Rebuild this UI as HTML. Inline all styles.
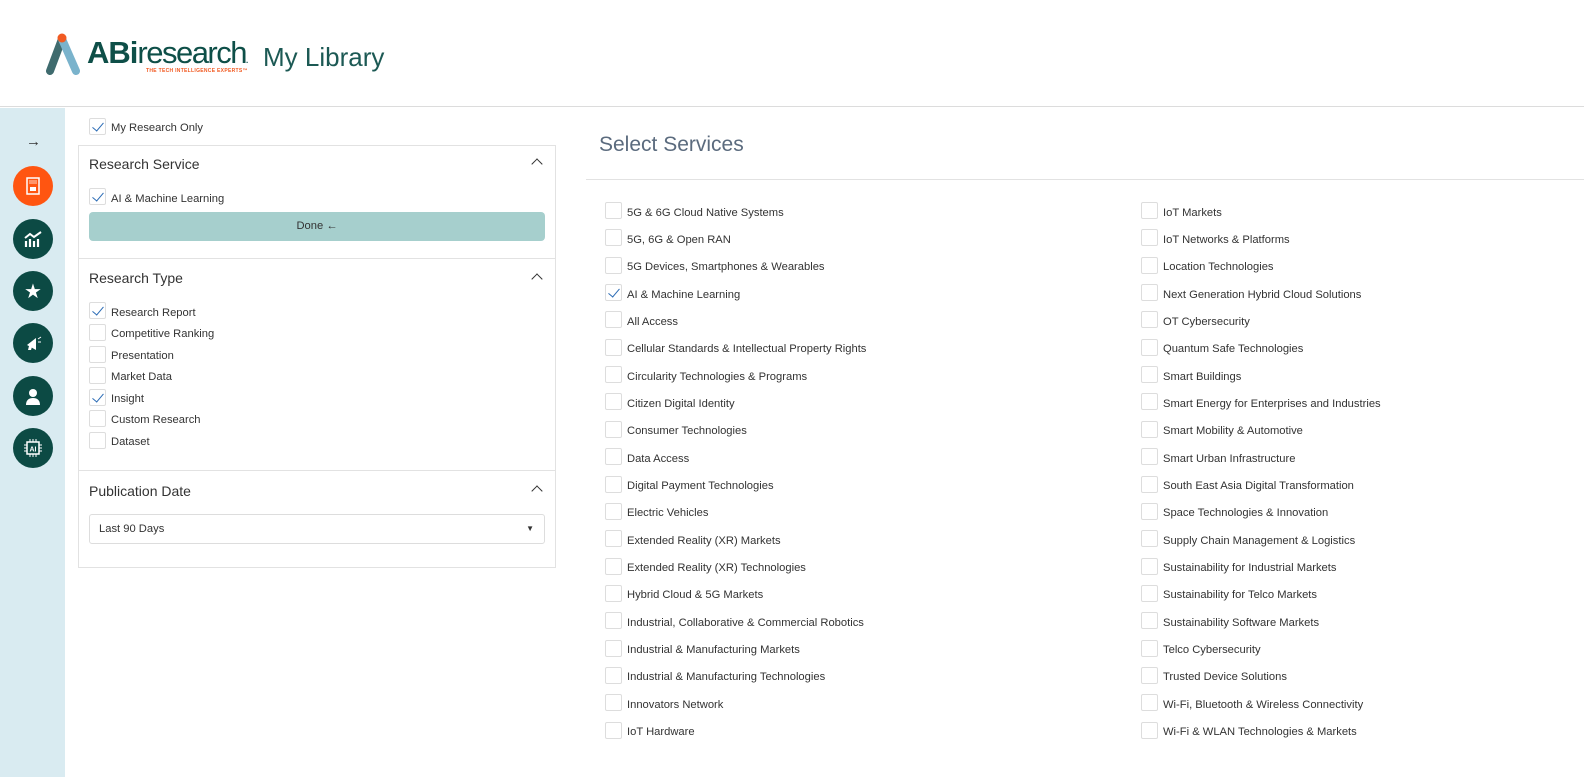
<!DOCTYPE html>
<html><head><meta charset="utf-8"><style>
*{box-sizing:border-box;margin:0;padding:0}
body{width:1584px;height:777px;overflow:hidden;background:#fff;font-family:"Liberation Sans",sans-serif;color:#333;position:relative}
.hdr{position:absolute;left:0;top:0;width:1584px;height:107px;border-bottom:1px solid #dcdcdc;background:#fff}
.side{position:absolute;left:0;top:108px;width:65px;height:669px;background:#d9ebf1}
.circ{position:absolute;left:13px;width:40px;height:40px;border-radius:50%;background:#0c4a44;display:flex;align-items:center;justify-content:center}
.cb{position:absolute;width:17px;height:17px;border:1px solid #ddd;background:#fff;border-radius:2px}
.cb.on::after{content:"";position:absolute;left:5px;top:1px;width:5px;height:10px;border:solid #2a6bb5;border-width:0 1.5px 1.5px 0;transform:rotate(40deg)}
.t{position:absolute;font-size:11.2px;color:#333;white-space:nowrap;margin-top:1.5px}
.box{position:absolute;left:78px;width:478px;border:1px solid #e2e2e2;background:#fff}
.h{position:absolute;font-size:14px;color:#333}
.chev{position:absolute;width:8px;height:8px;border:solid #333;border-width:1.5px 0 0 1.5px;transform:rotate(45deg)}
</style></head><body>
<div class="hdr">
<svg style="position:absolute;left:44px;top:32px" width="40" height="44" viewBox="0 0 40 44"><line x1="6" y1="39" x2="18" y2="7" stroke="#3f6b6e" stroke-width="8" stroke-linecap="round"/><line x1="18" y1="7" x2="32" y2="39" stroke="#7ab3cc" stroke-width="8" stroke-linecap="round"/><circle cx="18" cy="6" r="4.5" fill="#f15a22"/></svg>
<div style="position:absolute;left:87px;top:35px;font-size:31px;font-weight:bold;color:#0e4f48;letter-spacing:-1px;line-height:36px">ABi<span style="font-weight:normal;letter-spacing:-1.5px">research</span><span style="font-size:8px">.</span></div>
<div style="position:absolute;left:146px;top:68px;font-size:5px;font-weight:bold;color:#f15a22;letter-spacing:.3px">THE TECH INTELLIGENCE EXPERTS™</div>
<div style="position:absolute;left:263px;top:42px;font-size:26px;color:#1c5954">My Library</div>
</div>
<div class="side">
<div style="position:absolute;left:26px;top:25px;font-size:15px;color:#333">→</div>
<div class="circ" style="top:58px;background:#ff5511"><svg width="14" height="18"><rect x="1" y="1" width="12" height="16" fill="none" stroke="#fff" stroke-width="1.5"/><path d="M3 4h8M3 6h8" stroke="#fff" stroke-width=".8"/><rect x="4" y="10" width="6" height="4" fill="#fff"/></svg></div>
<div class="circ" style="top:111px"><svg width="20" height="18" viewBox="0 0 20 18"><path d="M2 8l5-4 4 3 7-5" stroke="#fff" fill="none" stroke-width="2"/><path d="M3 11v6M7 9v8M11 11v6M15 9v8" stroke="#fff" stroke-width="2.2"/></svg></div>
<div class="circ" style="top:163px;color:#fff;font-size:20px">★</div>
<div class="circ" style="top:215px"><svg width="20" height="20"><path d="M4 12l9-7v12z" fill="#fff"/><path d="M6 13l-1 4h3l1-3" fill="#fff"/><path d="M15 6l3-2M15 9h3" stroke="#fff"/></svg></div>
<div class="circ" style="top:268px"><svg width="20" height="20"><circle cx="10" cy="7" r="4" fill="#fff"/><path d="M3 19c0-5 3-7 7-7s7 2 7 7z" fill="#fff"/></svg></div>
<div class="circ" style="top:320px"><svg width="22" height="22"><rect x="5" y="5" width="12" height="12" fill="none" stroke="#fff" stroke-width="1.5"/><text x="11" y="14.5" font-size="7" font-weight="bold" fill="#fff" text-anchor="middle" font-family="Liberation Sans">AI</text><path d="M8 2v3M11 2v3M14 2v3M8 17v3M11 17v3M14 17v3M2 8h3M2 11h3M2 14h3M17 8h3M17 11h3M17 14h3" stroke="#fff"/></svg></div>
</div>

<div class="cb on" style="left:89px;top:118px"></div><div class="t" style="left:111px;top:120px">My Research Only</div>

<div class="box" style="top:145px;height:114px">
<div class="h" style="left:10px;top:10px">Research Service</div><div class="chev" style="left:454px;top:14px"></div>
<div class="cb on" style="left:10px;top:42px"></div><div class="t" style="left:32px;top:45px">AI &amp; Machine Learning</div>
<div style="position:absolute;left:10px;top:66px;width:456px;height:29px;background:#a6cfcd;border-radius:4px;text-align:center;line-height:29px;font-size:11.2px;color:#333">Done ←</div>
</div>
<div class="box" style="top:258px;height:213px">
<div class="h" style="left:10px;top:11px">Research Type</div><div class="chev" style="left:454px;top:16px"></div>
<div class="cb on" style="left:10px;top:43px"></div><div class="t" style="left:32px;top:46px">Research Report</div>
<div class="cb" style="left:10px;top:65px"></div><div class="t" style="left:32px;top:67px">Competitive Ranking</div>
<div class="cb" style="left:10px;top:87px"></div><div class="t" style="left:32px;top:89px">Presentation</div>
<div class="cb" style="left:10px;top:108px"></div><div class="t" style="left:32px;top:110px">Market Data</div>
<div class="cb on" style="left:10px;top:130px"></div><div class="t" style="left:32px;top:132px">Insight</div>
<div class="cb" style="left:10px;top:151px"></div><div class="t" style="left:32px;top:153px">Custom Research</div>
<div class="cb" style="left:10px;top:173px"></div><div class="t" style="left:32px;top:175px">Dataset</div>
</div>
<div class="box" style="top:470px;height:98px">
<div class="h" style="left:10px;top:12px">Publication Date</div><div class="chev" style="left:454px;top:16px"></div>
<div style="position:absolute;left:10px;top:43px;width:456px;height:30px;border:1px solid #ddd;border-radius:3px;font-size:11.2px;line-height:28px;padding-left:9px">Last 90 Days<span style="position:absolute;right:10px;top:0;font-size:8px">▼</span></div>
</div>

<div style="position:absolute;left:599px;top:133px;font-size:21px;color:#5b6b7e">Select Services</div>
<div style="position:absolute;left:586px;top:179px;width:998px;height:1px;background:#e2e2e2"></div>
<div id="list"></div>
<script>
var a=["5G & 6G Cloud Native Systems","5G, 6G & Open RAN","5G Devices, Smartphones & Wearables","AI & Machine Learning","All Access","Cellular Standards & Intellectual Property Rights","Circularity Technologies & Programs","Citizen Digital Identity","Consumer Technologies","Data Access","Digital Payment Technologies","Electric Vehicles","Extended Reality (XR) Markets","Extended Reality (XR) Technologies","Hybrid Cloud & 5G Markets","Industrial, Collaborative & Commercial Robotics","Industrial & Manufacturing Markets","Industrial & Manufacturing Technologies","Innovators Network","IoT Hardware"];
var b=["IoT Markets","IoT Networks & Platforms","Location Technologies","Next Generation Hybrid Cloud Solutions","OT Cybersecurity","Quantum Safe Technologies","Smart Buildings","Smart Energy for Enterprises and Industries","Smart Mobility & Automotive","Smart Urban Infrastructure","South East Asia Digital Transformation","Space Technologies & Innovation","Supply Chain Management & Logistics","Sustainability for Industrial Markets","Sustainability for Telco Markets","Sustainability Software Markets","Telco Cybersecurity","Trusted Device Solutions","Wi-Fi, Bluetooth & Wireless Connectivity","Wi-Fi & WLAN Technologies & Markets"];
var h="";function e(s){return s.replace(/&/g,"&amp;")}
for(var i=0;i<20;i++){var y=202+i*27.35;
h+='<div class="cb'+(i==3?' on':'')+'" style="left:605px;top:'+y+'px"></div><div class="t" style="left:627px;top:'+(y+3)+'px">'+e(a[i])+'</div>';
h+='<div class="cb" style="left:1141px;top:'+y+'px"></div><div class="t" style="left:1163px;top:'+(y+3)+'px">'+e(b[i])+'</div>';}
document.getElementById("list").innerHTML=h;
</script>
</body></html>
